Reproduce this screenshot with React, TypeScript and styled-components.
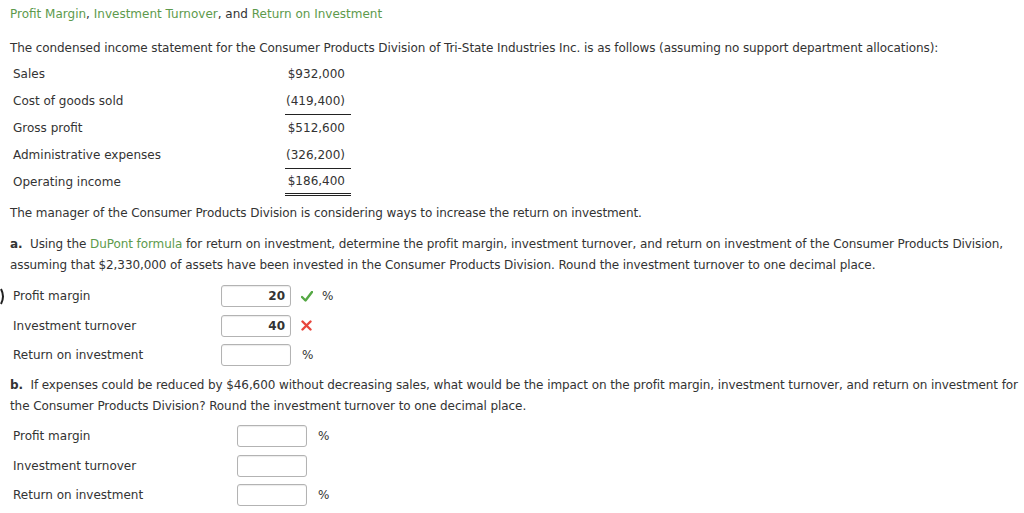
import { createGlobalStyle, styled } from 'styled-components';
import { Fragment } from 'react';

const GlobalStyle = createGlobalStyle`
    html, body {
        margin: 0;
        padding: 0;
        background: #fff;
    }
    body {
        font-family: "DejaVu Sans", Verdana, sans-serif;
        font-size: 12px;
        color: #333;
    }
`;

const Page = styled.main`
    padding: 6px 10px 0 10px;
    display: flex;
    flex-direction: column;
`;

const Title = styled.div`
    line-height: 16px;
    margin-bottom: 15.5px;
`;

const Link = styled.span`
    color: #5d9a4c;
`;

const Para = styled.p<{ top?: number }>`
    margin: ${(p) => p.top ?? 0}px 0 0 0;
    line-height: 21px;
    white-space: nowrap;
    letter-spacing: -0.085px;
`;

const Statement = styled.div`
    display: grid;
    grid-template-columns: 272px 66px;
    margin: 2px 0 0 3px;
`;

const Label = styled.div`
    height: 27px;
    display: flex;
    align-items: center;
`;

const Amount = styled.div<{ rule?: 'single' | 'double' }>`
    height: 27px;
    box-sizing: border-box;
    display: flex;
    align-items: center;
    justify-content: flex-end;
    padding-right: 6px;
    border-bottom: ${(p) =>
        p.rule === 'single' ? '1px solid #222' : p.rule === 'double' ? '3px double #222' : '1px solid transparent'};
`;

const Answers = styled.div<{ labelWidth: number; top: number }>`
    display: grid;
    grid-template-columns: ${(p) => p.labelWidth}px 70px auto;
    row-gap: 7.5px;
    align-items: center;
    margin: ${(p) => p.top}px 0 0 3px;
    position: relative;
`;

const AnswerLabel = styled.div`
    line-height: 22px;
`;

const Field = styled.div`
    width: 70px;
    height: 22px;
    box-sizing: border-box;
    border: 1px solid #b3b3b3;
    border-radius: 3px;
    box-shadow: inset 0 1px 1px rgba(0, 0, 0, 0.08);
    display: flex;
    align-items: center;
    justify-content: flex-end;
    padding-right: 5px;
    font-weight: bold;
    color: #333;
`;

const Mark = styled.div`
    display: flex;
    align-items: center;
    gap: 9px;
    padding-left: 10px;
`;

const Pct = styled.span<{ indent?: number }>`
    margin-left: ${(p) => p.indent ?? 0}px;
`;

const Bracket = styled.svg`
    position: absolute;
    left: -13px;
    top: 3px;
`;

const Check = () => (
    <svg width="12" height="11" viewBox="0 0 12 11">
        <path d="M1 6 L4.5 9.5 L11 1" fill="none" stroke="#55a844" strokeWidth="2.4" strokeLinecap="round" strokeLinejoin="round" />
    </svg>
);

const Cross = () => (
    <svg width="11" height="11" viewBox="0 0 11 11">
        <path d="M1.5 1.5 L9.5 9.5 M9.5 1.5 L1.5 9.5" stroke="#e8453c" strokeWidth="2.4" strokeLinecap="round" />
    </svg>
);

const rows: [string, string, 'single' | 'double' | undefined][] = [
    ['Sales', '$932,000', undefined],
    ['Cost of goods sold', '(419,400)', 'single'],
    ['Gross profit', '$512,600', undefined],
    ['Administrative expenses', '(326,200)', 'single'],
    ['Operating income', '$186,400', 'double'],
];

export default function App() {
    return (
        <>
            <GlobalStyle />
            <Page>
                <Title>
                    <Link>Profit Margin</Link>, <Link>Investment Turnover</Link>, and <Link>Return on Investment</Link>
                </Title>
                <Para>
                    The condensed income statement for the Consumer Products Division of Tri-State Industries Inc. is as follows (assuming no support department allocations):
                </Para>
                <Statement>
                    {rows.map(([label, amount, rule]) => (
                        <Fragment key={label}>
                            <Label>{label}</Label>
                            <Amount rule={rule}>{amount}</Amount>
                        </Fragment>
                    ))}
                </Statement>
                <Para top={7}>
                    The manager of the Consumer Products Division is considering ways to increase the return on investment.
                </Para>
                <Para top={10}>
                    <b>a.</b>&nbsp; Using the <Link>DuPont formula</Link> for return on investment, determine the profit margin, investment turnover, and return on investment of the Consumer Products Division,
                    <br />
                    assuming that $2,330,000 of assets have been invested in the Consumer Products Division. Round the investment turnover to one decimal place.
                </Para>
                <Answers labelWidth={208} top={9.5}>
                    <Bracket width="6" height="17" viewBox="0 0 6 17">
                        <path d="M1 1 Q5 8.5 1 16" fill="none" stroke="#222" strokeWidth="2" />
                    </Bracket>
                    <AnswerLabel>Profit margin</AnswerLabel>
                    <Field>20</Field>
                    <Mark><Check /><span>%</span></Mark>
                    <AnswerLabel>Investment turnover</AnswerLabel>
                    <Field>40</Field>
                    <Mark><Cross /></Mark>
                    <AnswerLabel>Return on investment</AnswerLabel>
                    <Field />
                    <Mark><Pct indent={1}>%</Pct></Mark>
                </Answers>
                <Para top={8.5}>
                    <b>b.</b>&nbsp; If expenses could be reduced by $46,600 without decreasing sales, what would be the impact on the profit margin, investment turnover, and return on investment for
                    <br />
                    the Consumer Products Division? Round the investment turnover to one decimal place.
                </Para>
                <Answers labelWidth={224} top={8.5}>
                    <AnswerLabel>Profit margin</AnswerLabel>
                    <Field />
                    <Mark><Pct indent={1}>%</Pct></Mark>
                    <AnswerLabel>Investment turnover</AnswerLabel>
                    <Field />
                    <Mark />
                    <AnswerLabel>Return on investment</AnswerLabel>
                    <Field />
                    <Mark><Pct indent={1}>%</Pct></Mark>
                </Answers>
            </Page>
        </>
    );
}
